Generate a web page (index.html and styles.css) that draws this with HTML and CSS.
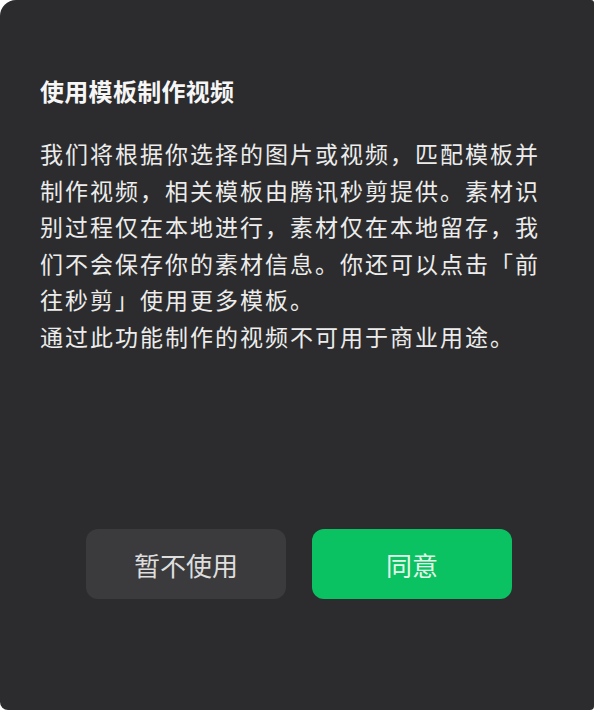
FILE: index.html
```html
<!DOCTYPE html>
<html lang="zh-CN">
<head>
    <meta charset="UTF-8">
    <meta name="viewport" content="width=device-width, initial-scale=1.0">
    <title>使用模板制作视频</title>
    <link rel="stylesheet" href="styles.css">
</head>
<body>
    <div class="dialog">
        <h1 class="dialog-title">使用模板制作视频</h1>

        <div class="dialog-body">
            <p>我们将根据你选择的图片或视频，匹配模板并制作视频，相关模板由腾讯秒剪提供。素材识别过程仅在本地进行，素材仅在本地留存，我们不会保存你的素材信息。你还可以点击「前往秒剪」使用更多模板。</p>
            <p>通过此功能制作的视频不可用于商业用途。</p>
        </div>

        <div class="dialog-actions">
            <button class="btn btn-cancel">暂不使用</button>
            <button class="btn btn-agree">同意</button>
        </div>
    </div>
</body>
</html>
```

FILE: styles.css
```css
html, body {
    margin: 0;
    padding: 0;
    background: #ffffff;
}
body {
    font-family: "Noto Sans CJK SC", "Noto Sans", sans-serif;
}
.dialog {
    box-sizing: border-box;
    width: 594px;
    height: 710px;
    background-color: #2c2c2e;
    border-radius: 16px 3px 4px 8px;
    padding: 74px 40px 111px 40px;
    display: flex;
    flex-direction: column;
}
.dialog-title {
    margin: 0;
    font-size: 24px;
    line-height: 34px;
    font-weight: bold;
    letter-spacing: 0.3px;
    color: #f6f6f6;
}
.dialog-body {
    margin-top: 27px;
    font-size: 23px;
    line-height: 36.6px;
    letter-spacing: 2px;
    color: #ececec;
    line-break: anywhere;
}
.dialog-body p {
    margin: 0;
}
.dialog-actions {
    margin-top: auto;
    display: flex;
    justify-content: center;
    gap: 26px;
    padding-left: 4px;
}
.btn {
    width: 200px;
    height: 70px;
    border: none;
    border-radius: 12px;
    font-family: inherit;
    font-size: 26px;
    cursor: pointer;
}
.btn-cancel {
    background-color: #3b3b3d;
    color: #dedede;
}
.btn-agree {
    background-color: #0ac262;
    color: #e4f7ea;
}
```
